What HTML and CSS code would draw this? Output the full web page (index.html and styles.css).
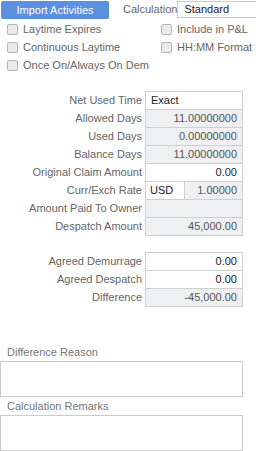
FILE: index.html
```html
<!DOCTYPE html>
<html>
<head>
<meta charset="utf-8">
<link rel="stylesheet" href="styles.css">
</head>
<body>
<div class="page">
  <div class="top">
    <button class="btn">Import Activities</button>
    <span class="calc-label">Calculation</span>
    <div class="calc-input">Standard</div>
  </div>
  <div class="checks">
    <div class="chk-row">
      <label class="chk chk-left"><span class="box"></span>Laytime Expires</label>
      <label class="chk chk-right"><span class="box"></span>Include in P&amp;L</label>
    </div>
    <div class="chk-row">
      <label class="chk chk-left"><span class="box"></span>Continuous Laytime</label>
      <label class="chk chk-right"><span class="box"></span>HH:MM Format</label>
    </div>
    <div class="chk-row">
      <label class="chk chk-left"><span class="box"></span>Once On/Always On Dem</label>
    </div>
  </div>

  <div class="fields group1">
    <div class="lbl">Net Used Time</div><div class="fld first">Exact</div>
    <div class="lbl">Allowed Days</div><div class="fld ro num">11.00000000</div>
    <div class="lbl">Used Days</div><div class="fld ro num">0.00000000</div>
    <div class="lbl">Balance Days</div><div class="fld ro num">11.00000000</div>
    <div class="lbl">Original Claim Amount</div><div class="fld num">0.00</div>
    <div class="lbl">Curr/Exch Rate</div><div class="fld split"><span class="cur">USD</span><span class="rate">1.00000</span></div>
    <div class="lbl">Amount Paid To Owner</div><div class="fld ro"></div>
    <div class="lbl">Despatch Amount</div><div class="fld ro num">45,000.00</div>
  </div>

  <div class="fields group2">
    <div class="lbl">Agreed Demurrage</div><div class="fld first num">0.00</div>
    <div class="lbl">Agreed Despatch</div><div class="fld num">0.00</div>
    <div class="lbl">Difference</div><div class="fld ro num">-45,000.00</div>
  </div>

  <div class="area-block reason">
    <div class="area-label">Difference Reason</div>
    <div class="area"></div>
  </div>
  <div class="area-block remarks">
    <div class="area-label">Calculation Remarks</div>
    <div class="area"></div>
  </div>
</div>
</body>
</html>
```

FILE: styles.css
```css
html, body {
  margin: 0;
  padding: 0;
  background: #ffffff;
}
body {
  font-family: "Liberation Sans", Arial, sans-serif;
  font-size: 11px;
  color: #666666;
}
.page {
  width: 256px;
  height: 451px;
  overflow: hidden;
}
.top {
  display: flex;
  align-items: flex-start;
  padding: 1px 0 0 1px;
  height: 19px;
}
.btn {
  width: 108px;
  height: 18px;
  border: none;
  border-radius: 2px;
  background: #5b90dc;
  color: #ffffff;
  font-family: "Liberation Sans", Arial, sans-serif;
  font-size: 11px;
  padding: 0;
  line-height: 18px;
}
.calc-label {
  margin-left: 14px;
  line-height: 17px;
  color: #666666;
}
.calc-input {
  margin-left: 0;
  flex: 1;
  height: 15px;
  border: 1px solid #cccccc;
  border-right: none;
  line-height: 14px;
  padding-left: 6px;
  color: #222222;
}
.checks {
  padding-top: 0;
}
.chk-row {
  display: flex;
  height: 18px;
  align-items: center;
}
.chk {
  display: flex;
  align-items: center;
  color: #666666;
}
.chk-left {
  padding-left: 7px;
  width: 154px;
}
.box {
  display: inline-block;
  width: 9px;
  height: 9px;
  border: 1px solid #b4b4b4;
  border-radius: 2px;
  background: #ebebeb;
  margin-right: 5px;
}
.fields {
  display: grid;
  grid-template-columns: 142px 98px;
  column-gap: 3px;
  grid-auto-rows: 18px;
}
.group1 {
  margin-top: 17px;
}
.group2 {
  margin-top: 17px;
}
.lbl {
  text-align: right;
  line-height: 19px;
  white-space: nowrap;
  color: #666666;
}
.fld {
  height: 19px;
  box-sizing: border-box;
  border: 1px solid #d0d0d0;
  background: #ffffff;
  color: #222222;
  line-height: 17px;
  padding: 0 5px;
}
.fld.ro {
  background: #eef0f2;
  color: #555555;
}
.fld.num {
  text-align: right;
}
.fld.split {
  display: flex;
  padding: 0;
}
.cur {
  width: 34px;
  padding-left: 4px;
  border-right: 1px solid #d0d0d0;
  color: #222222;
  background: #ffffff;
}
.rate {
  flex: 1;
  text-align: right;
  padding-right: 5px;
  background: #eef0f2;
  color: #555555;
}
.area-block {
  width: 243px;
}
.reason {
  margin-top: 39px;
}
.remarks {
  margin-top: 2px;
}
.area-label {
  padding-left: 7px;
  line-height: 14px;
  color: #777777;
}
.area {
  height: 34px;
  border: 1px solid #cccccc;
  margin-top: 2px;
}
```
